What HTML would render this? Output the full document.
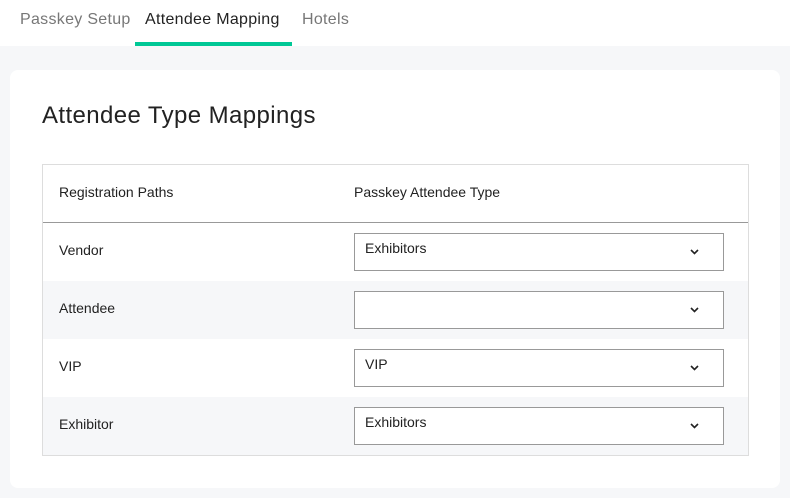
<!DOCTYPE html>
<html><head><style>
*{box-sizing:border-box;margin:0;padding:0}
body{width:790px;height:498px;background:#f6f7f9;font-family:"Liberation Sans",sans-serif;color:#222;position:relative;overflow:hidden}
.tabs{position:absolute;left:0;top:0;width:790px;height:46px;background:#fff}
.tab{position:absolute;top:11px;font-size:16px;color:#777;letter-spacing:0.3px}
.tab.act{color:#222}
.ul{position:absolute;left:135px;top:42px;width:157px;height:4px;background:#00c896}
.card{position:absolute;left:10px;top:70px;width:770px;height:418px;background:#fff;border-radius:8px}
h1{position:absolute;left:42px;top:102px;font-size:24px;font-weight:normal;color:#222;letter-spacing:0.4px}
.tbl{position:absolute;left:42px;top:164px;width:707px;height:292px;border:1px solid #ddd}
.hdr{position:absolute;left:0;top:0;width:705px;height:58px;border-bottom:1px solid #999}
.row{position:absolute;left:0;width:705px;height:58px}
.g{background:#f6f7f9}
.lbl{position:absolute;left:16px;font-size:14px;color:#222}
.sel{position:absolute;left:311px;top:10px;width:370px;height:38px;border:1px solid #999;background:#fff;font-size:14px;padding:6px 0 0 10px}
.sel svg{position:absolute;right:24px;top:15px}
</style></head><body>
<div class="tabs">
<span class="tab" style="left:20px">Passkey Setup</span>
<span class="tab act" style="left:145px">Attendee Mapping</span>
<span class="tab" style="left:302px">Hotels</span>
<div class="ul"></div>
</div>
<div class="card"></div>
<h1>Attendee Type Mappings</h1>
<div class="tbl">
<div class="hdr"><span class="lbl" style="top:19px">Registration Paths</span><span class="lbl" style="left:311px;top:19px">Passkey Attendee Type</span></div>
<div class="row" style="top:58px"><span class="lbl" style="top:19px">Vendor</span><div class="sel">Exhibitors<svg width="9" height="6" viewBox="0 0 9 6"><path d="M1 1l3.5 3.5L8 1" fill="none" stroke="#222" stroke-width="1.6"/></svg></div></div>
<div class="row g" style="top:116px"><span class="lbl" style="top:19px">Attendee</span><div class="sel"><svg width="9" height="6" viewBox="0 0 9 6"><path d="M1 1l3.5 3.5L8 1" fill="none" stroke="#222" stroke-width="1.6"/></svg></div></div>
<div class="row" style="top:174px"><span class="lbl" style="top:19px">VIP</span><div class="sel">VIP<svg width="9" height="6" viewBox="0 0 9 6"><path d="M1 1l3.5 3.5L8 1" fill="none" stroke="#222" stroke-width="1.6"/></svg></div></div>
<div class="row g" style="top:232px"><span class="lbl" style="top:19px">Exhibitor</span><div class="sel">Exhibitors<svg width="9" height="6" viewBox="0 0 9 6"><path d="M1 1l3.5 3.5L8 1" fill="none" stroke="#222" stroke-width="1.6"/></svg></div></div>
</div>
</body></html>
